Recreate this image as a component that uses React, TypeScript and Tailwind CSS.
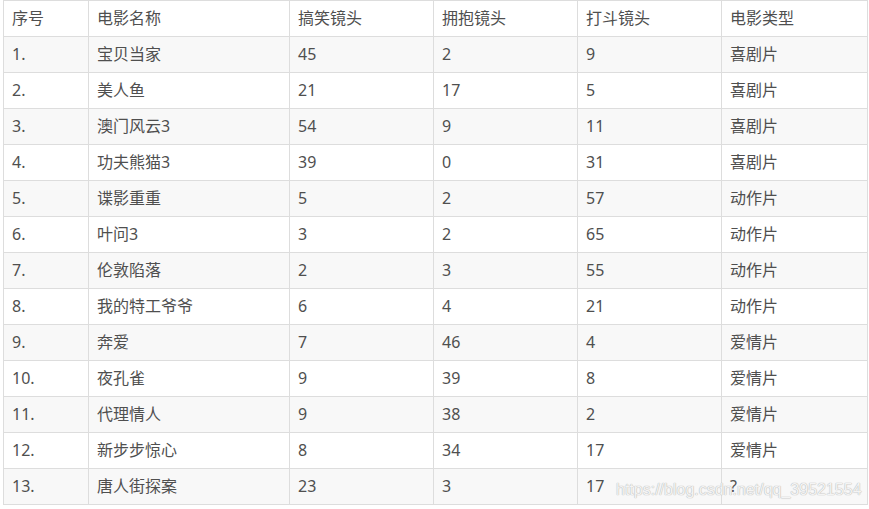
import React from 'react';

const headers = ['序号', '电影名称', '搞笑镜头', '拥抱镜头', '打斗镜头', '电影类型'];

const rows: string[][] = [
  ['1.', '宝贝当家', '45', '2', '9', '喜剧片'],
  ['2.', '美人鱼', '21', '17', '5', '喜剧片'],
  ['3.', '澳门风云3', '54', '9', '11', '喜剧片'],
  ['4.', '功夫熊猫3', '39', '0', '31', '喜剧片'],
  ['5.', '谍影重重', '5', '2', '57', '动作片'],
  ['6.', '叶问3', '3', '2', '65', '动作片'],
  ['7.', '伦敦陷落', '2', '3', '55', '动作片'],
  ['8.', '我的特工爷爷', '6', '4', '21', '动作片'],
  ['9.', '奔爱', '7', '46', '4', '爱情片'],
  ['10.', '夜孔雀', '9', '39', '8', '爱情片'],
  ['11.', '代理情人', '9', '38', '2', '爱情片'],
  ['12.', '新步步惊心', '8', '34', '17', '爱情片'],
  ['13.', '唐人街探案', '23', '3', '17', '?'],
];

const widths = ['w-[85px]', 'w-[201px]', 'w-[144px]', 'w-[144px]', 'w-[144px]', 'w-[146px]'];

export default function App() {
  return (
    <div className="relative w-[869px] h-[509px] bg-white font-['Noto_Sans','Noto_Sans_CJK_SC',sans-serif] text-[16px] text-[#4f4f4f]">
      <table className="ml-[3px] w-[865px] table-fixed border-collapse">
        <colgroup>
          {widths.map((w, i) => (
            <col key={i} className={w} />
          ))}
        </colgroup>
        <thead>
          <tr>
            {headers.map((h) => (
              <th key={h} className="border border-[#dddddd] px-2 py-[5px] text-left font-normal leading-[25px]">
                {h}
              </th>
            ))}
          </tr>
        </thead>
        <tbody>
          {rows.map((r, i) => (
            <tr key={i} className={i % 2 === 0 ? 'bg-[#f8f8f8]' : 'bg-white'}>
              {r.map((c, j) => (
                <td key={j} className="border border-[#dddddd] px-2 py-[5px] leading-[25px]">
                  {c}
                </td>
              ))}
            </tr>
          ))}
        </tbody>
      </table>
      {/* csdn watermark */}
      <div className="pointer-events-none absolute left-[616px] top-[478px] whitespace-nowrap font-['Liberation_Sans',sans-serif] text-[16px] leading-6 text-[#f4f4f4] [text-shadow:0_0_1px_#b0b0b0,0_0_1px_#c0c0c0]">
        https://blog.csdn.net/qq_39521554
      </div>
    </div>
  );
}
